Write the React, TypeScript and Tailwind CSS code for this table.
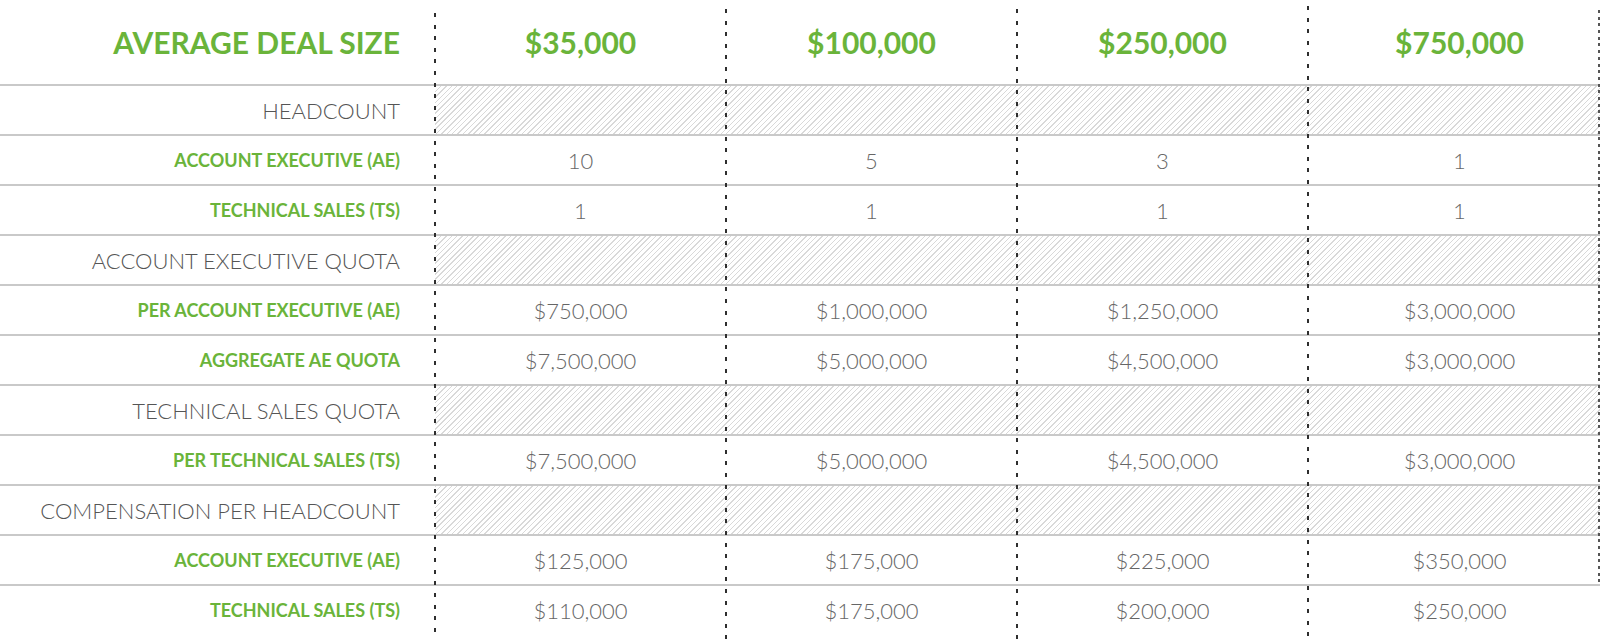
import React from "react";

type Row =
  | { kind: "section"; label: string }
  | { kind: "data"; label: string; values: string[] };

const columns = ["$35,000", "$100,000", "$250,000", "$750,000"];

const rows: Row[] = [
  { kind: "section", label: "HEADCOUNT" },
  { kind: "data", label: "ACCOUNT EXECUTIVE (AE)", values: ["10", "5", "3", "1"] },
  { kind: "data", label: "TECHNICAL SALES (TS)", values: ["1", "1", "1", "1"] },
  { kind: "section", label: "ACCOUNT EXECUTIVE QUOTA" },
  {
    kind: "data",
    label: "PER ACCOUNT EXECUTIVE (AE)",
    values: ["$750,000", "$1,000,000", "$1,250,000", "$3,000,000"],
  },
  {
    kind: "data",
    label: "AGGREGATE AE QUOTA",
    values: ["$7,500,000", "$5,000,000", "$4,500,000", "$3,000,000"],
  },
  { kind: "section", label: "TECHNICAL SALES QUOTA" },
  {
    kind: "data",
    label: "PER TECHNICAL SALES (TS)",
    values: ["$7,500,000", "$5,000,000", "$4,500,000", "$3,000,000"],
  },
  { kind: "section", label: "COMPENSATION PER HEADCOUNT" },
  {
    kind: "data",
    label: "ACCOUNT EXECUTIVE (AE)",
    values: ["$125,000", "$175,000", "$225,000", "$350,000"],
  },
  {
    kind: "data",
    label: "TECHNICAL SALES (TS)",
    values: ["$110,000", "$175,000", "$200,000", "$250,000"],
  },
];

// last column runs a little past the page edge, like the source table
const grid = "grid grid-cols-[435px_291px_291px_291px_303px]";
const hatch =
  "bg-[image:repeating-linear-gradient(135deg,#d9d9d9_0px,#d9d9d9_1px,transparent_1px,transparent_3.8px)]";
const dash =
  "bg-[image:repeating-linear-gradient(to_bottom,#2e2e2e_0px,#2e2e2e_4px,transparent_4px,transparent_11.6px)]";

export default function App() {
  return (
    <div className="relative h-[639px] w-[1600px] overflow-hidden bg-white font-['Lato',sans-serif]">
      {/* header */}
      <div className={`${grid} h-[84px] items-center`}>
        <div className="pr-[35px] text-right text-[30px] font-bold leading-none text-[#6ab43a]">
          AVERAGE DEAL SIZE
        </div>
        {columns.map((c) => (
          <div key={c} className="text-center text-[30px] font-bold leading-none text-[#6ab43a]">
            {c}
          </div>
        ))}
      </div>

      {rows.map((row, i) => (
        <div key={i} className={`${grid} h-[50px] items-stretch border-t-2 border-[#c9c9c9]`}>
          {row.kind === "section" ? (
            <>
              <div className="flex items-center justify-end pr-[35px] text-[22px] font-light text-[#555]">
                {row.label}
              </div>
              <div className={`col-span-4 ${hatch}`} />
            </>
          ) : (
            <>
              <div className="flex items-center justify-end pr-[35px] text-[18px] font-bold text-[#6ab43a]">
                {row.label}
              </div>
              {row.values.map((v, j) => (
                <div key={j} className="flex items-center justify-center text-[22px] font-light text-[#666]">
                  {v}
                </div>
              ))}
            </>
          )}
        </div>
      ))}

      {/* dashed column rules */}
      <div className={`absolute left-[434px] top-[13px] bottom-0 w-[2px] ${dash}`} />
      <div className={`absolute left-[725px] top-[9px] bottom-0 w-[2px] ${dash}`} />
      <div className={`absolute left-[1016px] top-[9px] bottom-0 w-[2px] ${dash}`} />
      <div className={`absolute left-[1307px] top-[6px] bottom-0 w-[2px] ${dash}`} />
      <div className="absolute left-[1598px] top-[10px] h-[575px] w-[2px] bg-[image:repeating-linear-gradient(to_bottom,#555_0px,#555_3px,transparent_3px,transparent_6.7px)]" />
    </div>
  );
}
